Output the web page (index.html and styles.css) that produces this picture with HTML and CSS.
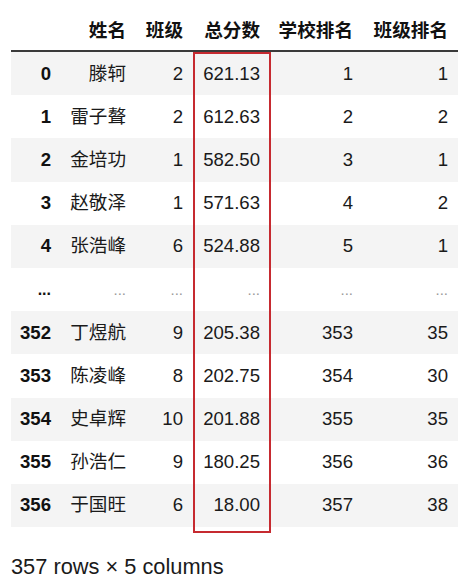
FILE: index.html
```html
<!DOCTYPE html>
<html lang="zh">
<head>
<meta charset="utf-8">
<link rel="stylesheet" href="styles.css">
</head>
<body>
<div class="page">
  <div class="frame">
    <table class="df">
      <colgroup>
        <col class="c-idx"><col class="c-name"><col class="c-cls"><col class="c-score"><col class="c-srank"><col class="c-crank">
      </colgroup>
      <thead>
        <tr><th></th><th>姓名</th><th>班级</th><th>总分数</th><th>学校排名</th><th>班级排名</th></tr>
      </thead>
      <tbody>
        <tr><th>0</th><td>滕轲</td><td>2</td><td>621.13</td><td>1</td><td>1</td></tr>
        <tr><th>1</th><td>雷子聱</td><td>2</td><td>612.63</td><td>2</td><td>2</td></tr>
        <tr><th>2</th><td>金培功</td><td>1</td><td>582.50</td><td>3</td><td>1</td></tr>
        <tr><th>3</th><td>赵敬泽</td><td>1</td><td>571.63</td><td>4</td><td>2</td></tr>
        <tr><th>4</th><td>张浩峰</td><td>6</td><td>524.88</td><td>5</td><td>1</td></tr>
        <tr class="dots"><th>...</th><td>...</td><td>...</td><td>...</td><td>...</td><td>...</td></tr>
        <tr><th>352</th><td>丁煜航</td><td>9</td><td>205.38</td><td>353</td><td>35</td></tr>
        <tr><th>353</th><td>陈凌峰</td><td>8</td><td>202.75</td><td>354</td><td>30</td></tr>
        <tr><th>354</th><td>史卓辉</td><td>10</td><td>201.88</td><td>355</td><td>35</td></tr>
        <tr><th>355</th><td>孙浩仁</td><td>9</td><td>180.25</td><td>356</td><td>36</td></tr>
        <tr><th>356</th><td>于国旺</td><td>6</td><td>18.00</td><td>357</td><td>38</td></tr>
      </tbody>
    </table>
    <div class="highlight"></div>
  </div>
  <p class="shape">357 rows × 5 columns</p>
</div>
</body>
</html>
```

FILE: styles.css
```css
html, body {
  margin: 0;
  padding: 0;
  background: #ffffff;
}

.page {
  padding: 0 0 0 11px;
  font-family: "Liberation Sans", Arial, "Noto Sans CJK SC", sans-serif;
  color: #111;
}

.frame {
  position: relative;
  width: 447px;
}

.df {
  border-collapse: separate;
  border-spacing: 0;
  table-layout: fixed;
  width: 447px;
  font-size: 18.6px;
}

.c-idx { width: 50px; }
.c-name { width: 75px; }
.c-cls { width: 57px; }
.c-score { width: 77px; }
.c-srank { width: 93px; }
.c-crank { width: 95px; }

.df th,
.df td {
  padding: 0 10px 0 0;
  text-align: right;
  white-space: nowrap;
  line-height: 22px;
}

.df thead tr {
  height: 52px;
}

.df thead th {
  font-weight: bold;
  vertical-align: bottom;
  padding-bottom: 8px;
  border-bottom: 2px solid #3a3a3a;
  color: #111;
}

.df tbody tr {
  height: 43.2px;
}

.df tbody th {
  font-weight: bold;
  vertical-align: middle;
  color: #111;
}

.df tbody td {
  vertical-align: middle;
  color: #1a1a1a;
}

.df tbody tr:nth-child(odd) {
  background: #f4f4f4;
}

.df tbody tr.dots td {
  color: #9a9a9a;
  font-size: 15px;
}

.df tbody tr.dots th {
  font-size: 16px;
}

.highlight {
  position: absolute;
  left: 182px;
  top: 52px;
  width: 78px;
  height: 481px;
  box-sizing: border-box;
  border: 2px solid #c62a30;
  pointer-events: none;
}

.shape {
  margin: 0;
  padding-top: 27px;
  font-size: 21.8px;
  line-height: 26px;
  color: #1a1a1a;
}
```
